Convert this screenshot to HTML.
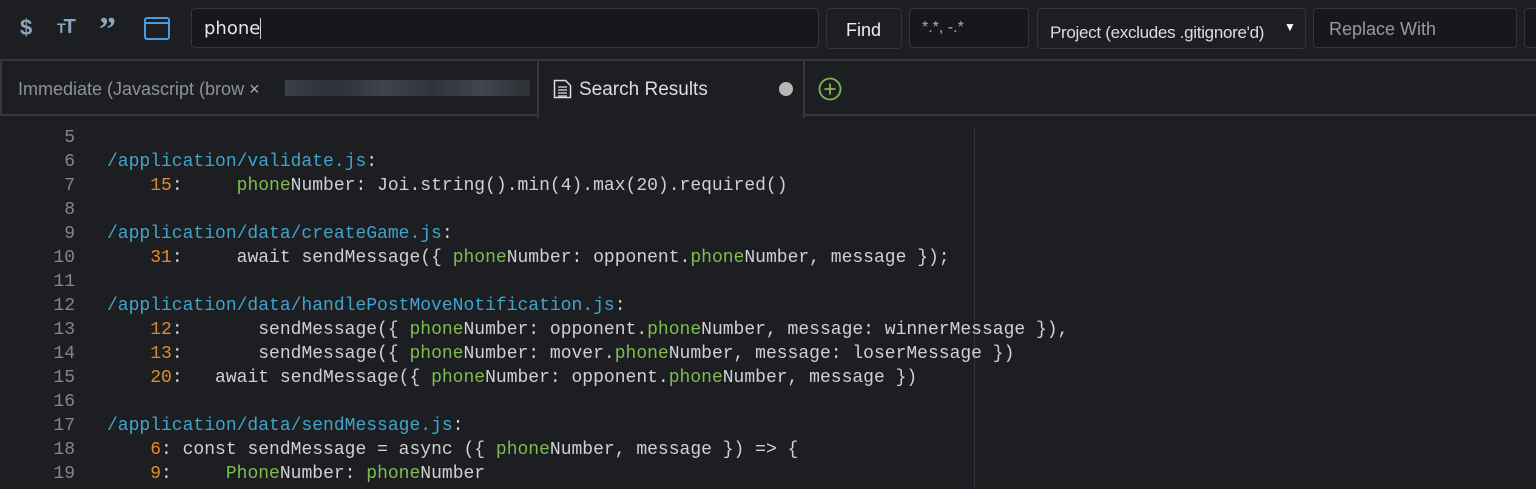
<!DOCTYPE html>
<html><head><style>
body{margin:0;width:1536px;height:489px;background:#1d1e22;overflow:hidden;font-family:"Liberation Sans",sans-serif;position:relative}
.a{position:absolute}
.box{position:absolute;background:#17181b;border:1px solid #35363b;border-radius:4px;box-sizing:border-box}
.code{position:absolute;left:0;top:126px;font-family:"Liberation Mono",monospace;font-size:18px;line-height:24px;color:#d0d0d0;white-space:pre}
.ln{display:inline-block;width:75px;text-align:right;color:#85868a;margin-right:32px}
.f{color:#3fa4cc}.o{color:#e38a2e}.g{color:#7dbd4e}
</style></head><body>
<div class="a" style="left:20px;top:15px;color:#8ea6bd;font-size:22px;font-weight:bold">$</div>
<div class="a" style="left:57px;top:16px;color:#8ea6bd;font-size:20px;font-weight:bold;letter-spacing:-2px"><span style="font-size:14px">T</span>T</div>
<div class="a" style="left:99px;top:20px;color:#8ea6bd;font-size:34px;line-height:20px;font-weight:bold;font-family:'Liberation Serif',serif">”</div>
<svg class="a" style="left:144px;top:17px" width="26" height="23"><rect x="1" y="1" width="24" height="21" rx="2" fill="none" stroke="#4a9be0" stroke-width="2"/><line x1="1" y1="6" x2="25" y2="6" stroke="#4a9be0" stroke-width="2"/></svg>
<div class="box" style="left:191px;top:8px;width:628px;height:40px"><span class="a" style="left:12px;top:9px;color:#e6e6e6;font-size:18px;font-family:'DejaVu Sans',sans-serif">phone<span style="border-right:1px solid #ccc"></span></span></div>
<div class="box" style="left:826px;top:8px;width:76px;height:41px;background:#1d1e22"><span class="a" style="left:19px;top:11px;color:#eee;font-size:18px">Find</span></div>
<div class="box" style="left:909px;top:8px;width:120px;height:40px"><span class="a" style="left:12px;top:10px;color:#aaa;font-size:16px">*.*, -.*</span></div>
<div class="box" style="left:1037px;top:8px;width:269px;height:41px;background:#1d1e22"><span class="a" style="left:12px;top:14px;color:#ddd;font-size:17px;letter-spacing:-0.3px">Project (excludes .gitignore'd)</span><span class="a" style="left:246px;top:11px;color:#fff;font-size:12px">▼</span></div>
<div class="box" style="left:1313px;top:8px;width:204px;height:40px"><span class="a" style="left:15px;top:10px;color:#999;font-size:18px">Replace With</span></div>
<div class="box" style="left:1524px;top:8px;width:30px;height:40px"></div>
<div class="a" style="left:0;top:59px;width:1536px;height:57px;border-top:2px solid #36373c;border-bottom:2px solid #36373c;box-sizing:border-box"></div>
<div class="a" style="left:0;top:59px;width:2px;height:57px;background:#36373c"></div>
<div class="a" style="left:18px;top:79px;color:#8e9299;font-size:18px">Immediate (Javascript (brow <span style="color:#aaa">×</span></div>
<div class="a" style="left:285px;top:80px;width:245px;height:16px;background:linear-gradient(90deg,#3a4048,#2d3138 20%,#3e444c 40%,#30343a 60%,#40464d 80%,#2e3136)"></div>
<div class="a" style="left:537px;top:59px;width:268px;height:59px;background:#1d1e22;border-left:2px solid #36373c;border-right:2px solid #36373c;border-top:2px solid #36373c;box-sizing:border-box"></div>
<svg class="a" style="left:553px;top:79px" width="20" height="20"><path d="M1.5 1.5h11l5 5v12h-16z" fill="none" stroke="#ddd" stroke-width="1.5"/><path d="M5 8h9M5 11h9M5 14h9M5 17h9" stroke="#ddd" stroke-width="1.3"/></svg>
<div class="a" style="left:579px;top:79px;color:#ddd;font-size:19px">Search Results</div>
<div class="a" style="left:779px;top:82px;width:14px;height:14px;border-radius:50%;background:#b8b8b8"></div>
<svg class="a" style="left:818px;top:77px" width="24" height="24"><circle cx="12" cy="12" r="10.5" fill="none" stroke="#7cb850" stroke-width="1.8"/><path d="M12 6.5v11M6.5 12h11" stroke="#7cb850" stroke-width="1.8"/></svg>
<div class="a" style="left:974px;top:127px;width:1px;height:362px;background:#333439"></div>
<div class="code"><span class="ln">5</span>
<span class="ln">6</span><span class="f">/application/validate.js</span>:
<span class="ln">7</span>    <span class="o">15</span>:     <span class="g">phone</span>Number: Joi.string().min(4).max(20).required()
<span class="ln">8</span>
<span class="ln">9</span><span class="f">/application/data/createGame.js</span>:
<span class="ln">10</span>    <span class="o">31</span>:     await sendMessage({ <span class="g">phone</span>Number: opponent.<span class="g">phone</span>Number, message });
<span class="ln">11</span>
<span class="ln">12</span><span class="f">/application/data/handlePostMoveNotification.js</span>:
<span class="ln">13</span>    <span class="o">12</span>:       sendMessage({ <span class="g">phone</span>Number: opponent.<span class="g">phone</span>Number, message: winnerMessage }),
<span class="ln">14</span>    <span class="o">13</span>:       sendMessage({ <span class="g">phone</span>Number: mover.<span class="g">phone</span>Number, message: loserMessage })
<span class="ln">15</span>    <span class="o">20</span>:   await sendMessage({ <span class="g">phone</span>Number: opponent.<span class="g">phone</span>Number, message })
<span class="ln">16</span>
<span class="ln">17</span><span class="f">/application/data/sendMessage.js</span>:
<span class="ln">18</span>    <span class="o">6</span>: const sendMessage = async ({ <span class="g">phone</span>Number, message }) =&gt; {
<span class="ln">19</span>    <span class="o">9</span>:     <span class="g">Phone</span>Number: <span class="g">phone</span>Number
</div>
</body></html>
